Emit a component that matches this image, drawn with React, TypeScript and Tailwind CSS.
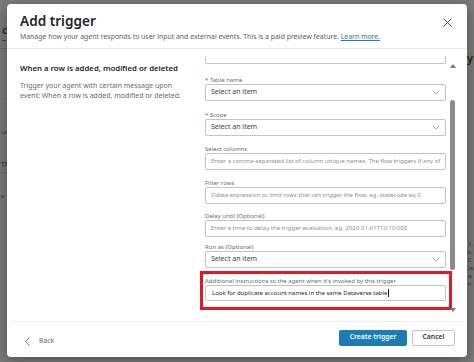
import React from 'react';

const font = { fontFamily: '"Noto Sans", "Open Sans", sans-serif' };

function Chevron() {
  return (
    <svg width="8" height="5" viewBox="0 0 8 5" className="shrink-0">
      <path d="M0.8 0.8 L4 4 L7.2 0.8" fill="none" stroke="#8f8f8f" strokeWidth="0.8" />
    </svg>
  );
}

function Label({ text, required }: { text: string; required?: boolean }) {
  return (
    <div className="h-[8px] text-[6px] leading-[8px] text-[#6b6b6b] whitespace-nowrap">
      {required && <span className="text-[#c4314b]">* </span>}
      {text}
    </div>
  );
}

function SelectBox() {
  return (
    <div className="h-[17px] border border-[#c3c3c3] rounded-[2px] bg-white flex items-center justify-between pl-[5px] pr-[5px]">
      <span className="text-[7px] text-[#424242]">Select an item</span>
      <Chevron />
    </div>
  );
}

function TextBox({ placeholder }: { placeholder: string }) {
  return (
    <div className="h-[17px] border border-[#c3c3c3] rounded-[2px] bg-white flex items-center pl-[5px] overflow-hidden">
      <span className="text-[6px] text-[#8f8f8f] whitespace-nowrap">{placeholder}</span>
    </div>
  );
}

export default function App() {
  return (
    <div className="relative w-[474px] h-[362px] bg-[#7b7b7b] overflow-hidden" style={font}>
      {/* dimmed page behind the dialog */}
      <div className="absolute left-[2px] top-[22px] text-[11px] font-semibold text-[#2a2a2a]">c</div>
      <div className="absolute left-[2px] top-[40px] w-[4px] h-[1px] bg-[#2c4a66]" />
      <div className="absolute left-0 top-[48px] w-[7px] h-[1px] bg-[#6f6f6f]" />
      <div className="absolute left-0 top-[98px] w-[7px] h-[1px] bg-[#6f6f6f]" />
      <div className="absolute left-[1px] top-[128px] text-[6px] text-[#3a3a3a]">ut</div>
      <div className="absolute left-[1px] top-[160px] text-[7px] text-[#262626]">Th</div>
      <div className="absolute left-0 top-[172px] w-[7px] h-[1px] bg-[#6f6f6f]" />
      <div className="absolute left-[1px] top-[192px] text-[6px] text-[#3a3a3a]">e</div>
      <div className="absolute left-[467px] top-[50px] text-[11px] font-semibold text-[#222]">y</div>
      <div className="absolute left-[468px] top-[240px] text-[6px] leading-[8px] text-[#2c2c2c]">
        1,<br />x,<br />C<br />Ja<br />o<br />r-
      </div>

      {/* dialog */}
      <div className="absolute left-[7px] top-[4px] w-[460px] h-[353px] bg-white rounded-[4px] shadow-[0_4px_16px_rgba(0,0,0,0.35)] flex flex-col">
        {/* header */}
        <div className="relative px-[13px] pt-[8px] pb-[5px] border-b border-[#e6e6e6]">
          <div className="text-[13.6px] leading-[18px] font-semibold text-[#242424]">Add trigger</div>
          <div className="text-[6.9px] leading-[13px] text-[#616161] whitespace-nowrap">
            Manage how your agent responds to user input and external events. This is a paid preview feature.{' '}
            <span className="text-[#2b77ad] underline">Learn more.</span>
          </div>
          <svg className="absolute left-[436px] top-[14px]" width="9" height="9" viewBox="0 0 9 9">
            <path d="M0.5 0.5 L8.5 8.5 M8.5 0.5 L0.5 8.5" stroke="#444" strokeWidth="0.9" />
          </svg>
        </div>

        {/* body */}
        <div className="flex flex-1 min-h-0">
          <div className="w-[193px] shrink-0 pl-[13px] pt-[11px]">
            <div className="text-[7.8px] leading-[16px] font-semibold text-[#242424] whitespace-nowrap">
              When a row is added, modified or deleted
            </div>
            <div className="mt-[5px] text-[7px] leading-[10px] text-[#6b6b6b] whitespace-nowrap">
              Trigger your agent with certain message upon
              <br />
              event: When a row is added, modified or deleted.
            </div>
          </div>

          <div className="relative flex-1 overflow-hidden">
            <div className="pl-[5px] pr-[21px] pt-[7px]">
              <div className="h-[8px] border-x border-b border-[#c3c3c3] rounded-b-[2px]" />

              <div className="mt-[12px]">
                <Label text="Table name" required />
                <SelectBox />
              </div>
              <div className="mt-[10px]">
                <Label text="Scope" required />
                <SelectBox />
              </div>
              <div className="mt-[9px]">
                <Label text="Select columns" />
                <TextBox placeholder="Enter a comma-separated list of column unique names. The flow triggers if any of" />
              </div>
              <div className="mt-[9px]">
                <Label text="Filter rows" />
                <TextBox placeholder="Odata expression to limit rows that can trigger the flow, eg. statecode eq 0" />
              </div>
              <div className="mt-[8px]">
                <Label text="Delay until (Optional)" />
                <TextBox placeholder="Enter a time to delay the trigger evaluation, eg. 2020-01-01T10:10:00Z" />
              </div>
              <div className="mt-[6px]">
                <Label text="Run as (Optional)" />
                <SelectBox />
              </div>

              <div className="mt-[3px] -ml-[5px] -mr-[6px] border-[3px] border-[#dd1b22] pt-[3px] pb-[6px] pl-[2px] pr-[3px]">
                <Label text="Additional instructions to the agent when it's invoked by this trigger" />
                <div className="h-[16px] border border-[#c3c3c3] rounded-[2px] bg-white flex items-center pl-[6px]">
                  <span className="text-[6px] text-[#1f1f1f] whitespace-nowrap">
                    Look for duplicate account names in the same Dataverse table
                  </span>
                  <span className="w-[1px] h-[8px] bg-[#111] ml-[0.5px]" />
                </div>
              </div>
            </div>

            {/* scrollbar */}
            <div className="absolute right-[11px] top-[15px] w-0 h-0 border-x-[3px] border-x-transparent border-b-[4px] border-b-[#7a7a7a]" />
            <div className="absolute right-[12px] top-[51px] w-[5px] h-[170px] rounded-[3px] bg-[#8a8a8a]" />
            <div className="absolute right-[11px] top-[259px] w-0 h-0 border-x-[3px] border-x-transparent border-t-[4px] border-t-[#7a7a7a]" />
          </div>
        </div>

        {/* footer */}
        <div className="h-[36px] mx-[3px] border-t border-[#ececec] flex items-center justify-between pl-[15px] pr-[9px]">
          <div className="flex items-center gap-[9px] text-[#6b6b6b] pt-[4px]">
            <svg width="5" height="9" viewBox="0 0 5 9">
              <path d="M4.5 0.5 L0.5 4.5 L4.5 8.5" fill="none" stroke="#6b6b6b" strokeWidth="0.9" />
            </svg>
            <span className="text-[6.8px]">Back</span>
          </div>
          <div className="flex items-center gap-[5px] -mt-[4px]">
            <div className="w-[68px] h-[16px] bg-[#1b7db4] rounded-[2px] flex items-center justify-center text-[6.8px] font-semibold text-white">
              Create trigger
            </div>
            <div className="w-[43px] h-[16px] border border-[#c3c3c3] rounded-[2px] flex items-center justify-center text-[6.8px] font-semibold text-[#333]">
              Cancel
            </div>
          </div>
        </div>
      </div>
    </div>
  );
}
